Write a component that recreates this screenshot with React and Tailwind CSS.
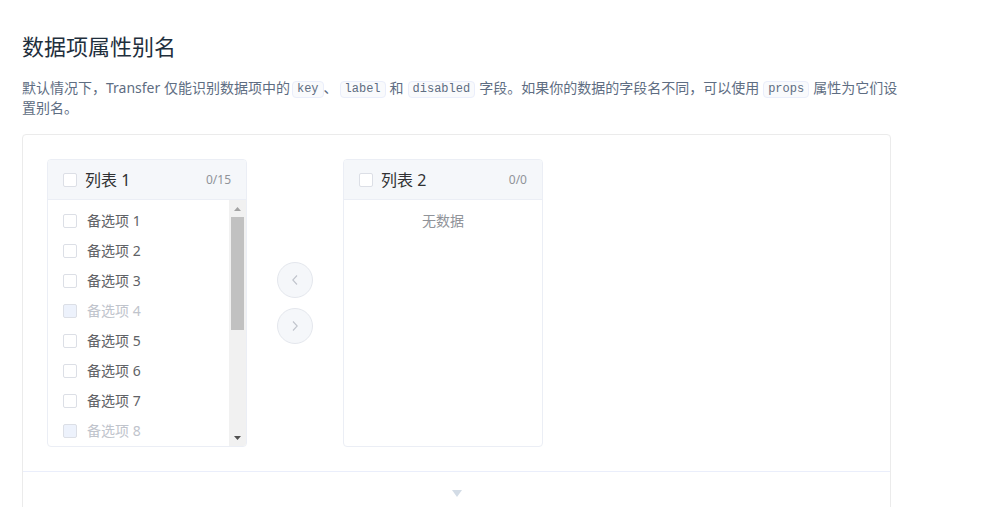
import React from "react";

const FONT = { fontFamily: '"Noto Sans", "Noto Sans CJK SC", sans-serif' };
const MONO = { fontFamily: '"Liberation Mono", "DejaVu Sans Mono", monospace' };

function Code({ children, className = "" }) {
  return (
    <code
      style={MONO}
      className={
        "inline-block align-middle px-[4px] leading-[15px] text-[12px] text-[#5e6d82] bg-[#f9fafc] border border-[#eaeefb] rounded-[4px] " +
        className
      }
    >
      {children}
    </code>
  );
}

function Checkbox({ disabled }) {
  return (
    <span
      className={
        "inline-block w-[14px] h-[14px] border border-[#dcdfe6] rounded-[2px] shrink-0 " +
        (disabled ? "bg-[#edf2fc]" : "bg-white")
      }
    />
  );
}

function Header({ title, count }) {
  return (
    <div className="h-[40px] bg-[#f5f7fa] border-b border-[#ebeef5] flex items-center pl-[15px] pr-[15px]">
      <Checkbox />
      <span className="ml-[8px] text-[16px] text-[#303133] leading-[40px]">{title}</span>
      <span className="ml-auto text-[12px] text-[#909399]">{count}</span>
    </div>
  );
}

const items = [1, 2, 3, 4, 5, 6, 7, 8];

function Chevron({ dir }) {
  return (
    <svg width="8" height="12" viewBox="0 0 8 12" fill="none">
      {dir === "left" ? (
        <polyline points="6,1.5 1.8,6 6,10.5" stroke="#c0c4cc" strokeWidth="1.1" />
      ) : (
        <polyline points="2,1.5 6.2,6 2,10.5" stroke="#c0c4cc" strokeWidth="1.1" />
      )}
    </svg>
  );
}

function CircleBtn({ dir }) {
  return (
    <div className="w-[36px] h-[36px] rounded-full bg-[#f5f7fa] border border-[#e4e7ed] flex items-center justify-center">
      <Chevron dir={dir} />
    </div>
  );
}

export default function App() {
  return (
    <div style={FONT} className="bg-white w-[1008px] h-[507px] overflow-hidden">
      <div className="pl-[22px] w-[891px]">
        <h3 className="mt-[31px] h-[30px] leading-[30px] text-[22px] font-normal text-[#1f2f3d]">
          数据项属性别名
        </h3>
        <p className="mt-[17px] text-[14px] leading-[20px] text-[#5e6d82] whitespace-nowrap">
          默认情况下，Transfer 仅能识别数据项中的<Code className="ml-[2px]">key</Code>、<Code className="ml-[2px] mr-[4px]">label</Code>和<Code className="mx-[4px]">disabled</Code>字段。如果你的数据的字段名不同，可以使用<Code className="mx-[4px]">props</Code>属性为它们设
          <br />
          置别名。
        </p>
        <div className="mt-[16px] w-[869px] border border-[#ebebeb] rounded-[4px]">
          <div className="p-[24px] flex items-center">
            {/* Panel 1 */}
            <div className="w-[200px] h-[288px] border border-[#ebeef5] rounded-[4px] overflow-hidden bg-white">
              <Header title="列表 1" count="0/15" />
              <div className="h-[246px] flex">
                <div className="flex-1 pt-[6px] overflow-hidden">
                  {items.map((i) => {
                    const dis = i === 4 || i === 8;
                    return (
                      <div key={i} className="h-[30px] flex items-center pl-[15px]">
                        <Checkbox disabled={dis} />
                        <span
                          className={
                            "ml-[10px] text-[14px] leading-[30px] " +
                            (dis ? "text-[#c0c4cc]" : "text-[#606266]")
                          }
                        >
                          备选项 {i}
                        </span>
                      </div>
                    );
                  })}
                </div>
                <div className="w-[17px] bg-[#f1f1f1] flex flex-col">
                  <div className="h-[17px] flex items-center justify-center">
                    <svg width="7" height="4" viewBox="0 0 7 4">
                      <polygon points="0,4 3.5,0 7,4" fill="#a3a3a3" />
                    </svg>
                  </div>
                  <div className="h-[113px] mx-[2px] bg-[#c1c1c1]" />
                  <div className="flex-1" />
                  <div className="h-[17px] flex items-center justify-center">
                    <svg width="7" height="4" viewBox="0 0 7 4">
                      <polygon points="0,0 7,0 3.5,4" fill="#505050" />
                    </svg>
                  </div>
                </div>
              </div>
            </div>

            {/* Buttons */}
            <div className="mx-[30px] flex flex-col gap-[10px]">
              <CircleBtn dir="left" />
              <CircleBtn dir="right" />
            </div>

            {/* Panel 2 */}
            <div className="w-[200px] h-[288px] border border-[#ebeef5] rounded-[4px] overflow-hidden bg-white">
              <Header title="列表 2" count="0/0" />
              <div className="pt-[6px] h-[36px] text-center text-[14px] leading-[30px] text-[#909399]">
                无数据
              </div>
            </div>
          </div>
          <div className="border-t border-[#eaeefb] h-[44px] flex items-center justify-center">
            <svg width="10" height="7" viewBox="0 0 10 7">
              <polygon points="0,0 10,0 5,7" fill="#d3dce6" />
            </svg>
          </div>
        </div>
      </div>
    </div>
  );
}
